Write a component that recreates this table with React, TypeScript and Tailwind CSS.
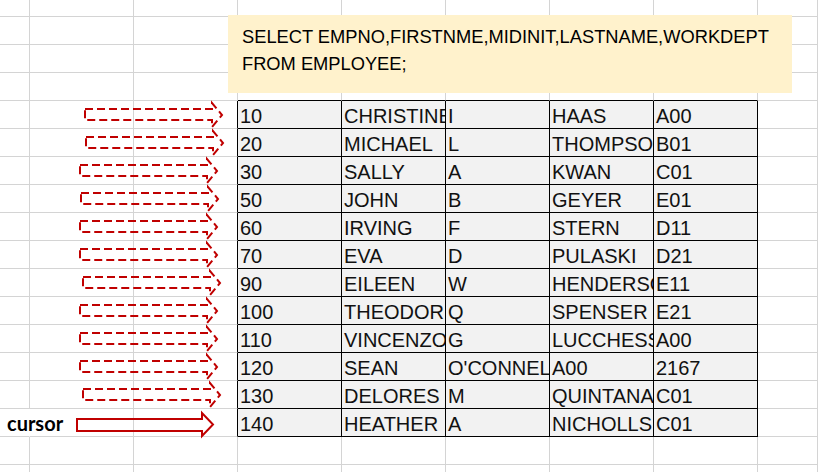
import React from "react";

const COLS = [30, 104, 104, 104, 104, 104, 104, 104, 60];
const ROW_COUNT = 18;

const DATA: string[][] = [
  ["10", "CHRISTINE", "I", "HAAS", "A00"],
  ["20", "MICHAEL", "L", "THOMPSON", "B01"],
  ["30", "SALLY", "A", "KWAN", "C01"],
  ["50", "JOHN", "B", "GEYER", "E01"],
  ["60", "IRVING", "F", "STERN", "D11"],
  ["70", "EVA", "D", "PULASKI", "D21"],
  ["90", "EILEEN", "W", "HENDERSON", "E11"],
  ["100", "THEODORE", "Q", "SPENSER", "E21"],
  ["110", "VINCENZO", "G", "LUCCHESSI", "A00"],
  ["120", "SEAN", "O'CONNELL", "A00", "2167"],
  ["130", "DELORES", "M", "QUINTANA", "C01"],
  ["140", "HEATHER", "A", "NICHOLLS", "C01"],
];

const ARROW_STARTS = [85, 86, 80, 81, 80, 80, 83, 80, 80, 80, 83];

function Cell({ r, c }: { r: number; c: number }) {
  const inTableRow = r >= 4 && r <= 15;
  const isTable = inTableRow && c >= 3 && c <= 7;
  const blackRight = inTableRow && c >= 2 && c <= 7;
  const blackBottom = r >= 3 && r <= 15 && c >= 3 && c <= 7;
  const isCursorCell = r === 15 && c === 0;

  const rightCls = isCursorCell
    ? "border-r-transparent"
    : blackRight
    ? "border-r-black"
    : "border-r-[#d4d4d4]";
  const bottomCls = blackBottom ? "border-b-black" : "border-b-[#d4d4d4]";
  const bg = isTable ? "bg-[#f2f2f2]" : "";
  const overflow = isCursorCell ? "overflow-visible" : "overflow-hidden";

  let content: React.ReactNode = null;
  if (isTable) {
    content = (
      <span className="pl-[2px] text-[20px] leading-[23px] text-[#111] font-['Liberation_Sans',Arial,sans-serif]">
        {DATA[r - 4][c - 3]}
      </span>
    );
  } else if (isCursorCell) {
    content = (
      <span className="pl-[7px] pb-[3px] text-[20px] leading-[20px] font-bold text-black font-['Lato','Liberation_Sans',sans-serif]">
        cursor
      </span>
    );
  }

  return (
    <div
      className={`flex shrink-0 items-end whitespace-nowrap border-r border-b ${rightCls} ${bottomCls} ${bg} ${overflow}`}
      style={{ width: COLS[c] }}
    >
      {content}
    </div>
  );
}

export default function App() {
  return (
    <div className="relative h-[472px] w-[818px] overflow-hidden bg-white">
      {Array.from({ length: ROW_COUNT }).map((_, r) => (
        <div key={r} className={`flex ${r === 0 ? "h-[17px]" : "h-[28px]"}`}>
          {COLS.map((_, c) => (
            <Cell key={c} r={r} c={c} />
          ))}
        </div>
      ))}

      <div className="absolute left-[228px] top-[15px] h-[78px] w-[564px] bg-[#fff2cc] pl-[14px] pt-[8px] text-[18.3px] leading-[27px] text-black font-['Liberation_Sans',Arial,sans-serif]">
        <div>SELECT EMPNO,FIRSTNME,MIDINIT,LASTNAME,WORKDEPT</div>
        <div>FROM EMPLOYEE;</div>
      </div>

      <svg
        className="pointer-events-none absolute left-0 top-0"
        width={818}
        height={472}
        viewBox="0 0 818 472"
      >
        {ARROW_STARTS.map((x0, i) => {
          const o = 28 * i;
          const xb = x0 + 127;
          const xt = x0 + 137;
          const d = `M${x0} ${109 + o} L${xb} ${109 + o} L${xb} ${103 + o} L${xt} ${115 + o} L${xb} ${127 + o} L${xb} ${120 + o} L${x0} ${120 + o} Z`;
          return (
            <path
              key={i}
              d={d}
              fill="none"
              stroke="#c00000"
              strokeWidth={2}
              strokeDasharray="8 4"
            />
          );
        })}
        <path
          d="M77 419 L202 419 L202 413 L213 424.5 L202 436 L202 431 L77 431 Z"
          fill="none"
          stroke="#c00000"
          strokeWidth={2}
        />
      </svg>
    </div>
  );
}
